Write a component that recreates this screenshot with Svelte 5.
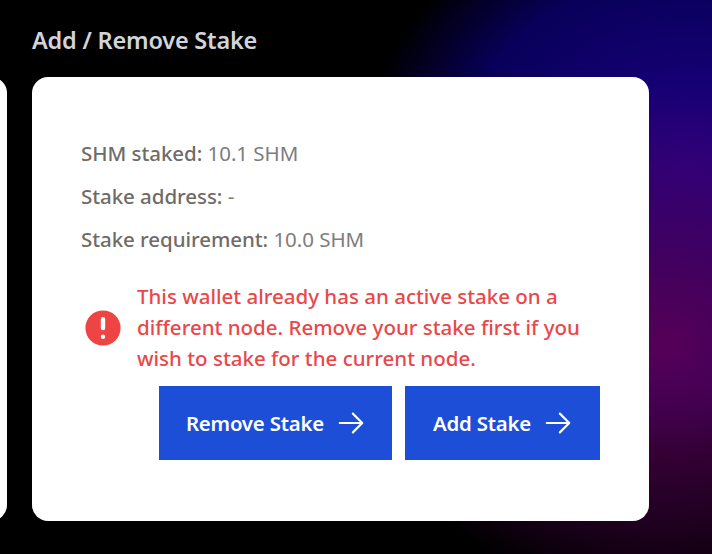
<script>
  let info = [
    { label: 'SHM staked:', value: '10.1 SHM' },
    { label: 'Stake address:', value: '-' },
    { label: 'Stake requirement:', value: '10.0 SHM' }
  ]
</script>

<div class="page">
  <h2>Add / Remove Stake</h2>
  <div class="row">
    <div class="card prev"></div>
    <div class="card">
      <div class="info">
        {#each info as item}
          <p><b>{item.label}</b> {item.value}</p>
        {/each}
      </div>
      <div class="warning">
        <svg class="alert" viewBox="0 0 20 20" aria-hidden="true">
          <path fill="#ef4444" fill-rule="evenodd" d="M18 10a8 8 0 11-16 0 8 8 0 0116 0zm-7 4a1 1 0 11-2 0 1 1 0 012 0zm-1-9a1 1 0 00-1 1v4a1 1 0 102 0V6a1 1 0 00-1-1z" clip-rule="evenodd"/>
        </svg>
        <span>This wallet already has an active stake on a different node. Remove your stake first if you wish to stake for the current node.</span>
      </div>
      <div class="actions">
        <button>
          Remove Stake
          <svg viewBox="0 0 24 24" aria-hidden="true"><path d="M3 12h18M13.500 4.500 21 12l-7.500 7.500"/></svg>
        </button>
        <button class="add">
          Add Stake
          <svg viewBox="0 0 24 24" aria-hidden="true"><path d="M3 12h18M13.500 4.500 21 12l-7.500 7.500"/></svg>
        </button>
      </div>
    </div>
  </div>
</div>

<style>
  :global(body) {
    margin: 0;
    background: #000;
  }

  .page {
    box-sizing: border-box;
    width: 712px;
    height: 554px;
    overflow: hidden;
    padding: 24px 63px 0 32px;
    font-family: "Noto Sans", "Open Sans", sans-serif;
    background:
      radial-gradient(ellipse 300px 260px at 665px 345px, #560058 0%, rgba(86, 0, 88, 0.35) 70%, rgba(86, 0, 88, 0) 100%),
      radial-gradient(ellipse 330px 280px at 690px 170px, #200088 0%, #08005a 70%, rgba(5, 0, 74, 0) 100%),
      #000;
  }

  h2 {
    margin: 0 0 20px;
    font-size: 23.500px;
    line-height: 33px;
    font-weight: 600;
    color: #d1d5db;
    letter-spacing: -0.2px;
  }

  .row {
    display: flex;
    gap: 25px;
    margin-left: -100px;
  }

  .card {
    box-sizing: border-box;
    flex: none;
    width: 617px;
    height: 444px;
    padding: 62px 49px 0 49px;
    background: #fff;
    border-radius: 16px;
  }

  .prev {
    width: 75px;
    padding: 0;
  }

  .info p {
    margin: 0 0 14px;
    font-size: 20.500px;
    line-height: 29px;
    color: #7d7d7d;
    letter-spacing: -0.05px;
  }

  .info b {
    font-weight: 500;
    color: #6f6b66;
  }

  .warning {
    display: flex;
    align-items: center;
    gap: 12px;
    margin: 27px 0 0 0;
    color: #e9474a;
    font-size: 20.500px;
    font-weight: 500;
    line-height: 31px;
    letter-spacing: 0;
  }

  .alert {
    flex: none;
    width: 44px;
    height: 44px;
  }

  .actions {
    display: flex;
    justify-content: flex-end;
    gap: 13px;
    margin-top: 12px;
  }

  button {
    display: flex;
    align-items: center;
    justify-content: center;
    gap: 12px;
    height: 74px;
    padding: 0 26px 0 27px;
    border: 0;
    background: #1d4ed8;
    color: #fff;
    font: 600 20.400px "Noto Sans", "Open Sans", sans-serif;
    letter-spacing: -0.2px;
    cursor: pointer;
  }

  .add {
    width: 195px;
  }

  button svg {
    width: 30px;
    height: 30px;
    fill: none;
    stroke: #fff;
    stroke-width: 1.7;
    stroke-linecap: round;
    stroke-linejoin: round;
  }
</style>
